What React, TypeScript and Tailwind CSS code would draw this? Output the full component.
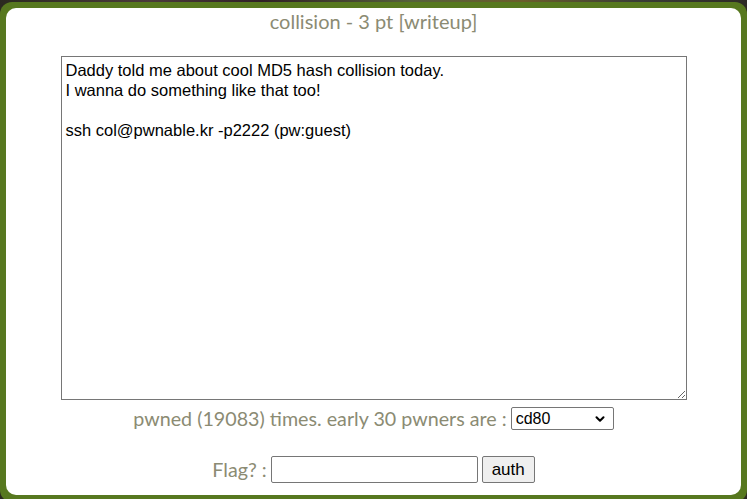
import { ChevronDown } from "lucide-react";

const lato = { fontFamily: "Lato, 'Noto Sans', sans-serif" };
const arial = { fontFamily: "'Liberation Sans', Arial, sans-serif" };

export default function App() {
  return (
    <div className="h-[499px] w-[747px] overflow-hidden bg-[linear-gradient(90deg,#2b2a20_0%,#4a3a3a_20%,#2f2025_35%,#55603a_55%,#6a5d2a_70%,#3a3d36_85%,#2d2a25_100%)] pt-[2px]">
      <div className="h-[500px] rounded-[12px] bg-[#57781f] px-[6px] pt-[6px]">
        <div
          className="flex h-[487px] flex-col items-center rounded-[10px] bg-white pt-[2px] text-[#8b8b73]"
          style={lato}
        >
          <h1 className="text-[20px] leading-[22px] font-normal">
            collision - 3 pt [writeup]
          </h1>
          <textarea
            readOnly
            className="mt-[24px] h-[344px] w-[626px] resize-y border border-[#767676] bg-white pl-[4px] pr-[3px] py-[3px] text-[16.5px] leading-[20px] text-black outline-none"
            style={arial}
            defaultValue={
              "Daddy told me about cool MD5 hash collision today.\nI wanna do something like that too!\n\nssh col@pwnable.kr -p2222 (pw:guest)"
            }
          />
          <div className="mt-[7px] flex h-[23px] items-center gap-[4px]">
            <span className="text-[19.7px] leading-[22px]">
              pwned (19083) times. early 30 pwners are :
            </span>
            <div
              className="flex h-[23px] w-[103px] items-center justify-between rounded-[2px] border border-[#767676] bg-white pl-[4px] pr-[6px] text-[16px] text-black"
              style={arial}
            >
              <span>cd80</span>
              <ChevronDown size={14} strokeWidth={3.5} />
            </div>
          </div>
          <div className="mt-[26px] flex h-[27px] items-center gap-[4px]">
            <span className="text-[19.7px] leading-[22px]">Flag? :</span>
            <input
              className="h-[27px] w-[207px] rounded-[2px] border border-[#767676] bg-white px-[2px] outline-none"
              type="text"
            />
            <button
              className="h-[27px] w-[53px] rounded-[2px] border border-[#767676] bg-[#efefef] text-[17px] text-black"
              style={arial}
            >
              auth
            </button>
          </div>
        </div>
      </div>
    </div>
  );
}
